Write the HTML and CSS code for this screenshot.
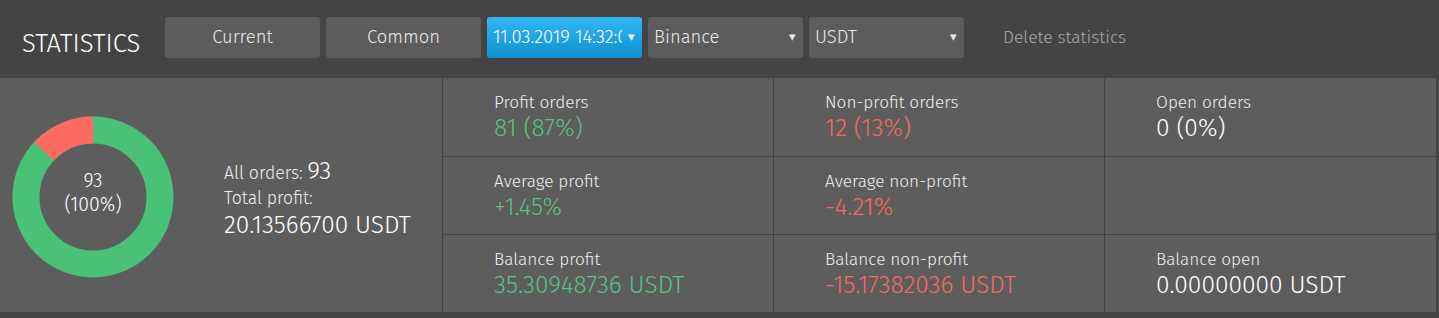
FILE: index.html
```html
<!DOCTYPE html>
<html>
<head>
<meta charset="utf-8">
<link rel="stylesheet" href="styles.css">
</head>
<body>
<div class="page">
  <header class="topbar">
    <h1 class="title">STATISTICS</h1>
    <div class="controls">
      <button class="btn">Current</button>
      <button class="btn">Common</button>
      <div class="select select-active"><span class="select-text">11.03.2019 14:32:00</span><span class="caret">▾</span></div>
      <div class="select"><span class="select-text">Binance</span><span class="caret">▾</span></div>
      <div class="select"><span class="select-text">USDT</span><span class="caret">▾</span></div>
    </div>
    <a class="delete">Delete statistics</a>
  </header>
  <section class="stats">
    <div class="summary">
      <div class="donut">
        <svg width="162" height="162" viewBox="0 0 162 162">
          <circle cx="81" cy="81" r="67" fill="none" stroke="#49c176" stroke-width="27"/>
          <circle cx="81" cy="81" r="67" fill="none" stroke="#fd6a5f" stroke-width="27" stroke-dasharray="54.7 366" transform="rotate(-90 81 81) scale(1 -1) translate(0 -162)"/>
        </svg>
        <div class="donut-label"><span>93</span><span>(100%)</span></div>
      </div>
      <div class="totals">
        <div class="line"><span class="lbl">All orders:</span> <span class="big">93</span></div>
        <div class="line lbl">Total profit:</div>
        <div class="line total">20.13566700 USDT</div>
      </div>
    </div>
    <div class="grid">
      <div class="cell"><div class="lbl">Profit orders</div><div class="val green">81 (87%)</div></div>
      <div class="cell"><div class="lbl">Non-profit orders</div><div class="val red">12 (13%)</div></div>
      <div class="cell"><div class="lbl">Open orders</div><div class="val">0 (0%)</div></div>
      <div class="cell"><div class="lbl">Average profit</div><div class="val green">+1.45%</div></div>
      <div class="cell"><div class="lbl">Average non-profit</div><div class="val red">-4.21%</div></div>
      <div class="cell"></div>
      <div class="cell"><div class="lbl">Balance profit</div><div class="val green">35.30948736 USDT</div></div>
      <div class="cell"><div class="lbl">Balance non-profit</div><div class="val red">-15.17382036 USDT</div></div>
      <div class="cell"><div class="lbl">Balance open</div><div class="val">0.00000000 USDT</div></div>
    </div>
  </section>
</div>
</body>
</html>
```
FILE: styles.css
```css
html, body {
  margin: 0;
  padding: 0;
  background: #444444;
}
body {
  font-family: "Fira Sans", "Open Sans", sans-serif;
  font-weight: 300;
  color: #ffffff;
}
.page {
  width: 1439px;
  height: 318px;
  background: #444444;
}
.topbar {
  height: 78px;
  display: flex;
  align-items: center;
  padding-left: 22px;
  box-sizing: border-box;
}
.title {
  margin: 0;
  font-weight: 300;
  font-size: 25.6px;
  width: 143px;
  padding-top: 9px;
}
.controls {
  display: flex;
  gap: 6px;
  padding-bottom: 3px;
}
.btn {
  width: 155px;
  height: 41px;
  border: none;
  border-radius: 3px;
  background: #5c5c5c;
  color: #e8e8e8;
  font-family: inherit;
  font-weight: 300;
  font-size: 18.4px;
  padding: 0 0 2px;
}
.select {
  width: 155px;
  height: 41px;
  border-radius: 3px;
  background: #5c5c5c;
  display: flex;
  align-items: center;
  padding: 0 7px 2px 6px;
  box-sizing: border-box;
  color: #e8e8e8;
  font-size: 18.4px;
}
.select-active {
  background: linear-gradient(#33b8f4, #0f8fcf);
  color: #ffffff;
}
.select-text {
  flex: 1;
  overflow: hidden;
  white-space: nowrap;
  text-overflow: clip;
}
.caret {
  font-size: 13px;
  margin-left: 6px;
  font-weight: 400;
}
.delete {
  margin-left: 39px;
  padding-bottom: 3px;
  font-size: 17.4px;
  color: #a9a9a9;
}
.stats {
  display: flex;
  gap: 1px;
  height: 234px;
  width: 1436px;
}
.summary {
  width: 442px;
  background: #5d5d5d;
  display: flex;
  align-items: center;
}
.donut {
  position: relative;
  width: 162px;
  height: 162px;
  margin-left: 12px;
  margin-top: 4px;
}
.donut svg {
  display: block;
}
.donut-label {
  position: absolute;
  inset: 0;
  display: flex;
  flex-direction: column;
  align-items: center;
  justify-content: center;
  font-size: 19.5px;
  line-height: 24px;
  padding-bottom: 9px;
}
.totals {
  margin-left: 50px;
  margin-top: 6px;
}
.line {
  line-height: 25px;
}
.lbl {
  font-size: 17.6px;
  color: #eeeeee;
}
.big {
  font-size: 24.5px;
}
.total {
  font-size: 24.5px;
  line-height: 28px;
}
.grid {
  flex: 1;
  display: grid;
  grid-template-columns: 330px 330px 1fr;
  grid-template-rows: 78px 77px 77px;
  gap: 1px;
}
.cell {
  background: #5d5d5d;
  padding: 15px 0 0 51px;
}
.cell .lbl {
  font-size: 17.2px;
  line-height: 20px;
}
.val {
  font-size: 24.6px;
  line-height: 30px;
}
.green { color: #5cbf84; }
.red { color: #f4695f; }
```
